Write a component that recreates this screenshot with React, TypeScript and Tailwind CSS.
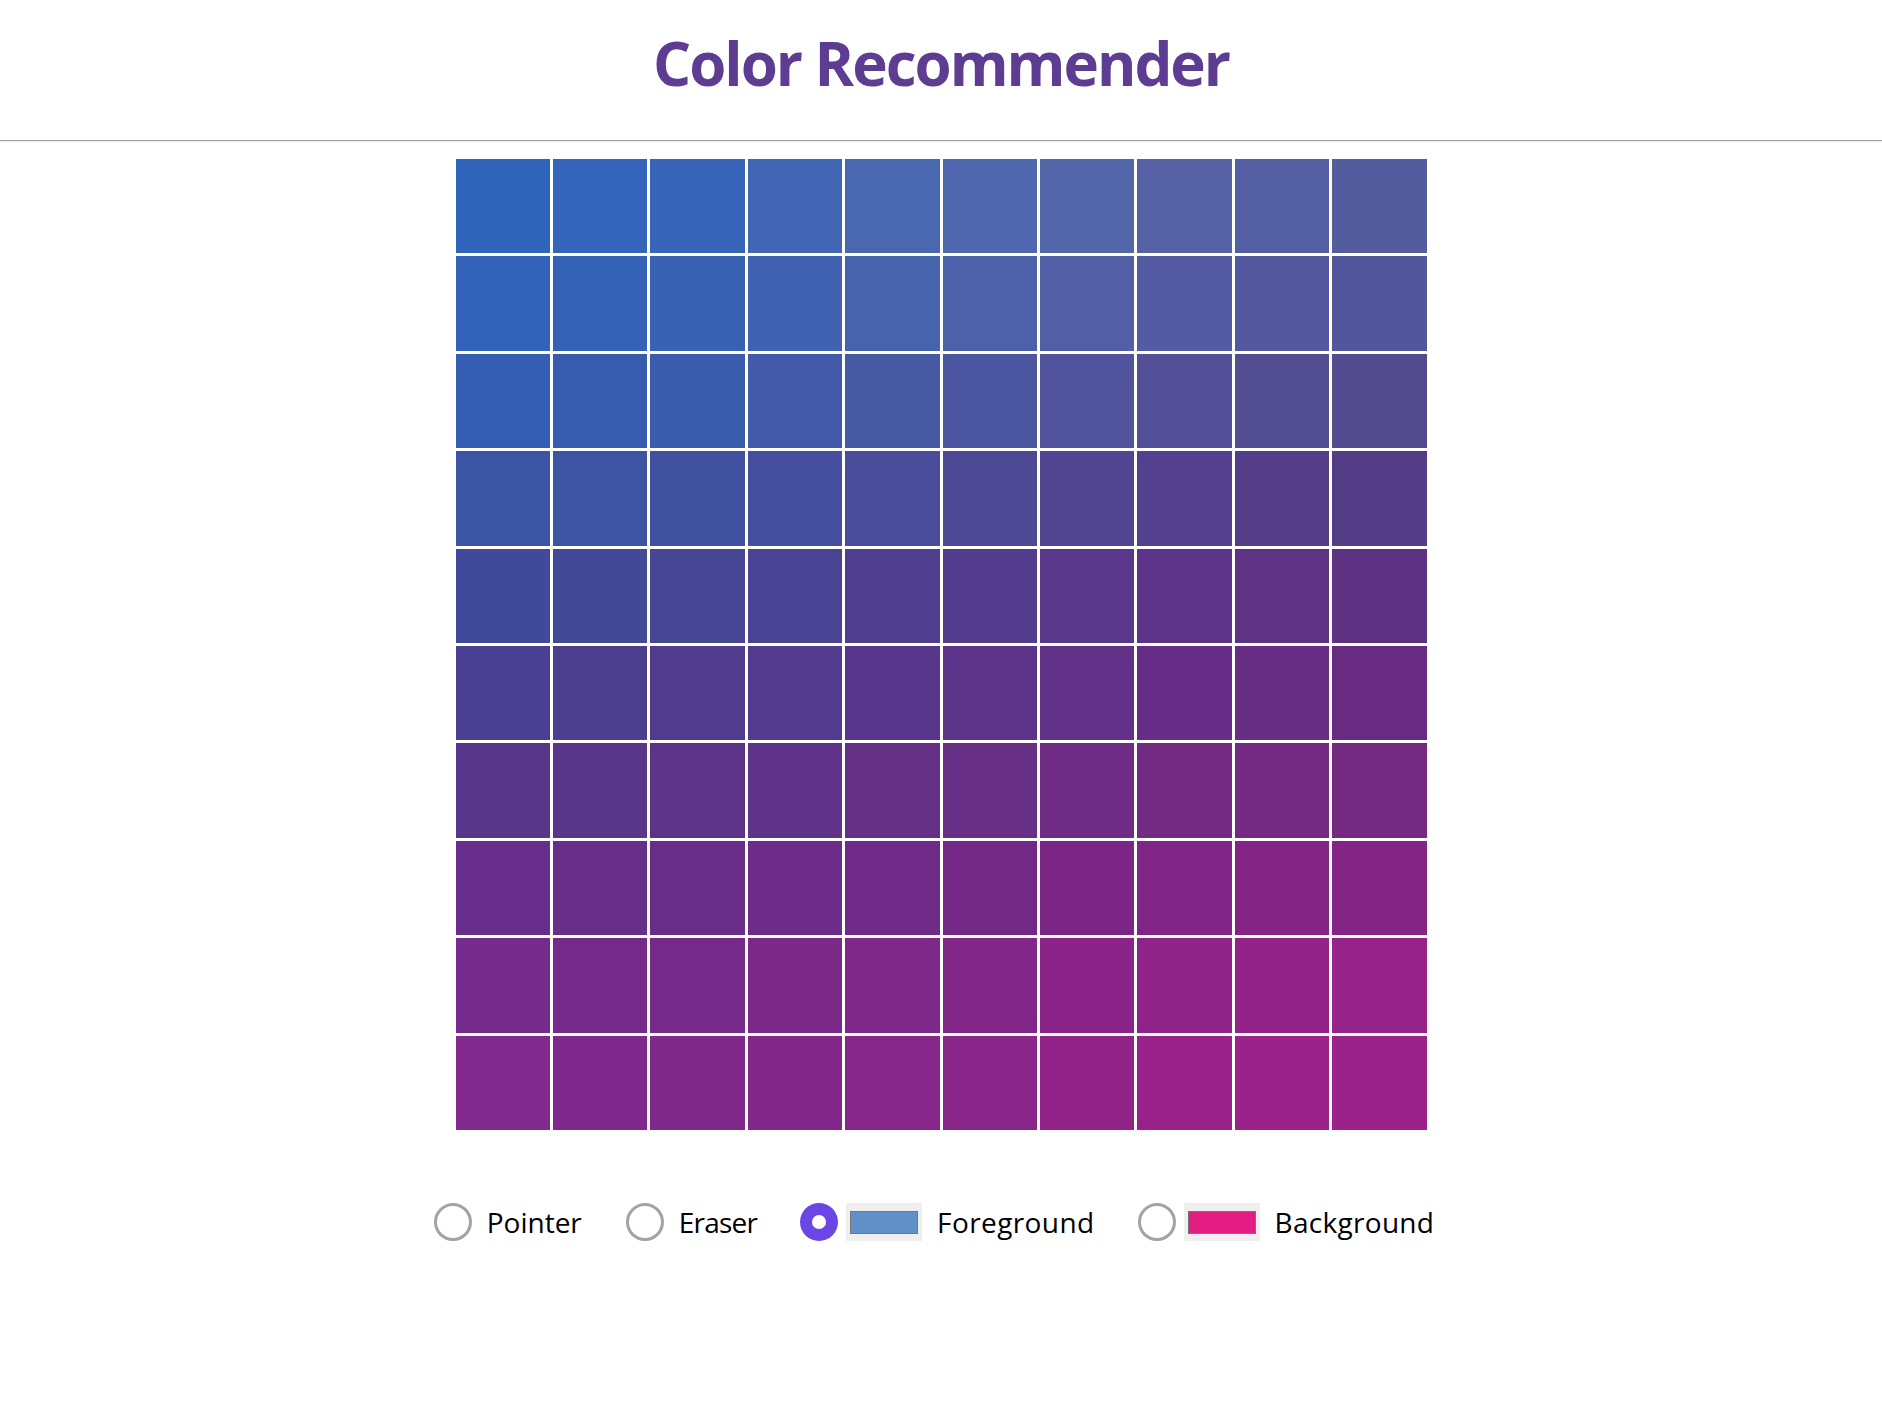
import React from "react";

const left = ["#3165bc","#3263b8","#355db2","#3b55a4","#414a99","#4b3f91","#58368a","#662e8a","#752b8c","#822a8e"];
const right = ["#535d9e","#52579b","#524c8f","#533d87","#5e3282","#672c82","#752a82","#842585","#952389","#9c228b"];
const known: Record<number, string[]> = {
  0: ["#3165bc","#3465ba","#3865ba","#4266b4","#4a68b0","#4f67ae","#5466aa","#5662a5","#545ea2","#535d9e"],
  4: ["#414a99","#424997","#474695","#4b4495","#503f91","#533c8d","#59388b","#5c3487","#5e3284","#5e3282"],
  9: ["#822a8e","#80298c","#7f298a","#83288a","#87278a","#8a2589","#922389","#98228a","#9b228b","#9c228b"],
};

function hex(h: string): number[] {
  return [parseInt(h.slice(1, 3), 16), parseInt(h.slice(3, 5), 16), parseInt(h.slice(5, 7), 16)];
}
function lerp(a: number[], b: number[], t: number) {
  return a.map((v, i) => v + (b[i] - v) * t);
}
function dev(k: number, j: number) {
  const base = lerp(hex(left[k]), hex(right[k]), j / 9);
  const act = hex(known[k][j]);
  return act.map((v, i) => v - base[i]);
}
function cellColor(i: number, j: number) {
  const base = lerp(hex(left[i]), hex(right[i]), j / 9);
  let d: number[];
  if (i <= 4) d = lerp(dev(0, j), dev(4, j), i / 4);
  else d = lerp(dev(4, j), dev(9, j), (i - 4) / 5);
  const c = base.map((v, k) => Math.max(0, Math.min(255, Math.round(v + d[k]))));
  return `rgb(${c[0]},${c[1]},${c[2]})`;
}

function Radio({ checked }: { checked?: boolean }) {
  if (checked) {
    return (
      <span className="flex h-[38px] w-[38px] items-center justify-center rounded-full bg-[#6b46e6]">
        <span className="h-[14px] w-[14px] rounded-full bg-white" />
      </span>
    );
  }
  return <span className="box-border block h-[38px] w-[38px] rounded-full border-[3px] border-[#a3a3a3] bg-white" />;
}

function Swatch({ color }: { color: string }) {
  return (
    <span className="ml-[8px] flex h-[38px] w-[76px] items-center justify-center bg-[#efefef]">
      <span className="box-border block h-[23px] w-[68px] border border-[#767676]" style={{ backgroundColor: color }} />
    </span>
  );
}

export default function App() {
  const rows = Array.from({ length: 10 }, (_, i) => i);
  return (
    <div className="min-h-[1411px] bg-white" style={{ fontFamily: '"Open Sans", "Noto Sans", sans-serif' }}>
      <header className="h-[140px] pt-[33px] text-center">
        <h1 className="text-[60px] font-bold leading-none tracking-[-2px] text-[#5d3c92]">Color Recommender</h1>
      </header>
      <div className="h-[2px] border-t border-b border-t-[#a3a3a3] border-b-[#ececec]" />
      <div className="mx-auto mt-[17px] grid w-[971px] grid-cols-10 gap-[3px]">
        {rows.map((i) =>
          rows.map((j) => (
            <div key={`${i}-${j}`} className="aspect-square" style={{ backgroundColor: cellColor(i, j) }} />
          ))
        )}
      </div>
      <div className="mt-[73px] flex items-center justify-center pr-[14px] text-[28px] leading-none text-black">
        <label className="flex items-center">
          <Radio />
          <span className="ml-[15px]">Pointer</span>
        </label>
        <label className="ml-[44px] flex items-center">
          <Radio />
          <span className="ml-[15px] tracking-[-0.8px]">Eraser</span>
        </label>
        <label className="ml-[43px] flex items-center">
          <Radio checked />
          <Swatch color="#6190c9" />
          <span className="ml-[15px] tracking-[0.4px]">Foreground</span>
        </label>
        <label className="ml-[43px] flex items-center">
          <Radio />
          <Swatch color="#e31c82" />
          <span className="ml-[15px] tracking-[0.3px]">Background</span>
        </label>
      </div>
    </div>
  );
}
